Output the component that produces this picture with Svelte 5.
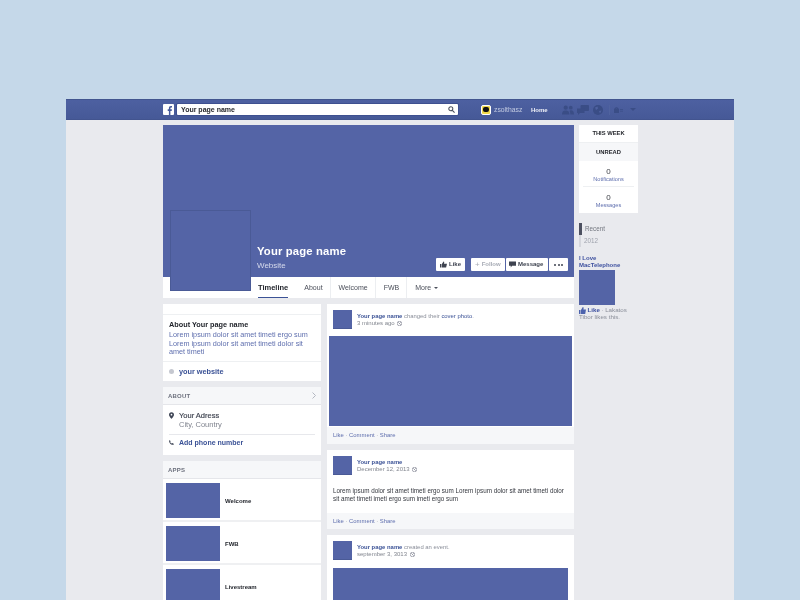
<script>
  const apps = ['Welcome', 'FWB', 'Livestream'];
  const tabs = ['About', 'Welcome', 'FWB'];
</script>

<div class="frame">
  <header class="topbar">
    <div class="fb"><svg viewBox="0 0 11 11" width="11" height="11"><rect width="11" height="11" rx="1" fill="#fff"/><path d="M7.4 11V6.900h1.300l.2-1.600H7.400v-1c0-.5.2-.8.8-.8h.8V2.100c-.2 0-.6-.1-1.100-.1-1.200 0-2 .7-2 2v1.300H4.700v1.600h1.200V11z" fill="#44589a"/></svg></div>
    <div class="search">
      <span>Your page name</span>
      <svg viewBox="0 0 8 8" width="7" height="7"><circle cx="3.200" cy="3.200" r="2.300" fill="none" stroke="#4a4f5c" stroke-width="1.200"/><path d="M5 5l2.500 2.500" stroke="#4a4f5c" stroke-width="1.300"/></svg>
    </div>
    <div class="avatar"><i></i></div>
    <span class="user">zsolthasz</span>
    <span class="home">Home</span>
    <div class="tools">
      <svg viewBox="0 0 13 10" width="12" height="10"><circle cx="4" cy="2.500" r="2.300"/><path d="M0 10c0-3.500 1.500-4.500 4-4.500S8 6.500 8 10z"/><circle cx="9.500" cy="2.500" r="2"/><path d="M8.800 5.500c2.700-.5 4.200 1 4.200 4.500H9c0-2-.2-3.300-1-4z"/></svg>
      <svg viewBox="0 0 12 10" width="12" height="10"><rect x="3.500" width="8.500" height="6" rx="1"/><path d="M0 3.500h7.500v4.500H3L1 10V8H0z"/></svg>
      <svg viewBox="0 0 10 10" width="10" height="10"><circle cx="5" cy="5" r="5"/><path d="M2 2.500l2.500-1 .5 2-2 1.500zM6 6l2.500-.5L7 8.500z" fill="#4f62a0"/></svg>
      <b class="sep"></b>
      <svg class="lock" viewBox="0 0 9 6" width="9" height="6"><path d="M0 1.500h5v4.500H0zM1 1.500a1.500 1.300 0 0 1 3 0h-.8a.7.600 0 0 0-1.400 0z"/><path d="M6 2h3v.8H6zM6 3.800h3v.8H6z"/></svg>
      <svg viewBox="0 0 6 3" width="6" height="3"><path d="M0 0h6L3 3z"/></svg>
    </div>
  </header>

  <div class="page">
    <div class="content">
      <section class="hero">
        <div class="cover">
          <div class="title">
            <h1>Your page name</h1>
            <p>Website</p>
          </div>
          <div class="actions">
            <button class="btn strong"><svg viewBox="0 0 8 7" width="7" height="7"><path d="M0 3h1.600v4H0zM2.200 3L4 0c1 0 1 1 .6 2.500H8L7 7H2.200z"/></svg>Like</button>
            <div class="group">
              <button class="btn muted"><span class="plus">+</span>Follow</button>
              <button class="btn msg"><svg viewBox="0 0 8 7" width="7" height="7"><path d="M0 0h8v5H3.500L2 7V5H0z"/></svg>Message</button>
              <button class="btn dots"><i></i><i></i><i></i></button>
            </div>
          </div>
        </div>
        <nav class="tabs">
          <span class="tab active">Timeline</span>
          {#each tabs as t}<span class="tab">{t}</span>{/each}
          <span class="tab last">More <i class="caret"></i></span>
        </nav>
        <div class="picture"></div>
      </section>

      <div class="columns">
        <aside class="left">
          <div class="card about">
            <div class="strip"></div>
            <div class="about-text">
              <h3>About Your page name</h3>
              <p>Lorem ipsum dolor sit amet timeti ergo sum Lorem ipsum dolor sit amet timeti dolor sit amet timeti</p>
            </div>
            <div class="site"><i></i><a>your website</a></div>
          </div>

          <div class="card">
            <div class="head">ABOUT<svg viewBox="0 0 4 7" width="4" height="7"><path d="M.5.500L3.500 3.500.5 6.500" fill="none" stroke="#b4b8c2"/></svg></div>
            <div class="info">
              <div class="addr">
                <svg viewBox="0 0 6 8" width="5" height="7"><path fill-rule="evenodd" d="M3 0a3 3 0 0 1 3 3c0 2-3 5-3 5S0 5 0 3a3 3 0 0 1 3-3zm0 2a1 1 0 1 0 0 2 1 1 0 0 0 0-2z" fill="#3f4656"/></svg>
                <div><strong>Your Adress</strong><span>City, Country</span></div>
              </div>
              <div class="phone">
                <svg viewBox="0 0 7 7" width="5" height="5"><path d="M1 0l1.300 1.800-.7.900c.4 1 1.100 1.700 2.300 2.200l.9-.7L7 5.600C6.500 6.700 5.500 7 4.500 6.700 2.500 6 .7 4.200.2 2.300 0 1.300.300.400 1 0z" fill="#3f4656"/></svg>
                <a>Add phone number</a>
              </div>
            </div>
          </div>

          <div class="card">
            <div class="head">APPS</div>
            {#each apps as a}
              <div class="app"><div class="thumb"></div><b>{a}</b></div>
            {/each}
          </div>
        </aside>

        <main class="feed">
          <article class="post first">
            <div class="meta">
              <div class="ava"></div>
              <div class="who">
                <div><a class="nm">Your page name</a> changed their <a>cover photo</a>.</div>
                <div class="when">3 minutes ago <svg viewBox="0 0 6 6" width="5" height="5"><use href="#globe"/></svg></div>
              </div>
            </div>
            <div class="photo"></div>
            <div class="foot"><a>Like</a> · <a>Comment</a> · <a>Share</a></div>
          </article>

          <article class="post second">
            <div class="meta">
              <div class="ava"></div>
              <div class="who">
                <div><a class="nm">Your page name</a></div>
                <div class="when">December 12, 2013 <svg viewBox="0 0 6 6" width="5" height="5"><use href="#globe"/></svg></div>
              </div>
            </div>
            <p class="body">Lorem ipsum dolor sit amet timeti ergo sum Lorem ipsum dolor sit amet timeti dolor sit amet timeti imeti ergo sum imeti ergo sum</p>
            <div class="foot"><a>Like</a> · <a>Comment</a> · <a>Share</a></div>
          </article>

          <article class="post">
            <div class="meta">
              <div class="ava"></div>
              <div class="who">
                <div><a class="nm">Your page name</a> created an event.</div>
                <div class="when">september 3, 3013 <svg viewBox="0 0 6 6" width="5" height="5"><use href="#globe"/></svg></div>
              </div>
            </div>
            <div class="event"></div>
          </article>
        </main>
      </div>
    </div>

    <aside class="side">
      <div class="week">
        <div class="wk">THIS WEEK</div>
        <div class="wk unread">UNREAD</div>
        <div class="stat"><b>0</b><a>Notifications</a></div>
        <div class="stat"><b>0</b><a>Messages</a></div>
      </div>
      <div class="years">
        <span class="on">Recent</span>
        <span>2012</span>
      </div>
      <div class="ad">
        <a class="adt">I Love<br/>MacTelephone</a>
        <div class="adimg"></div>
        <div class="adline"><svg viewBox="0 0 7 7" width="7" height="7"><path d="M0 3h1.500v4H0zM2 3l1.800-3c1 0 1 1 .6 2.500H7L6.200 7H2z" fill="#4d63ad"/></svg><a>Like</a><span>· Lakatos</span></div>
        <div>Tibor likes this.</div>
      </div>
    </aside>
  </div>
</div>

<svg width="0" height="0" class="defs"><defs><g id="globe"><circle cx="3" cy="3" r="2.700" fill="none" stroke="#7d8290" stroke-width=".8"/><path d="M1.500 1.500l3 3M4.500 1.500L3 3" stroke="#7d8290" stroke-width=".8"/></g></defs></svg>

<style>
  :global(body) { margin: 0; background: #c5d8e9; overflow: hidden; }
  * { box-sizing: border-box; }
  a { color: #3b5296; }
  .defs { position: absolute; }
  .frame {
    margin: 99px 0 0 66px; width: 668px; height: 501px; overflow: hidden;
    background: #e9eaee; font-family: "Liberation Sans", Arial, sans-serif; color: #333;
    filter: blur(.3px);
  }
  .topbar {
    height: 21px; padding-left: 97px; display: flex; align-items: center;
    background: linear-gradient(#4d60a1, #465997);
    border-top: 1px solid #42558f; border-bottom: 1px solid #42548f;
  }
  .fb { width: 11px; height: 11px; margin-right: 3px; display: flex; }
  .search {
    width: 281px; height: 11px; background: #fff; border-radius: 1px; padding: 0 3px 0 4px;
    display: flex; justify-content: space-between; align-items: center;
    font-size: 7px; font-weight: 700; color: #26282e; box-shadow: 0 0 0 1px #3e5090;
  }
  .avatar { width: 10px; height: 10px; margin-left: 23px; border-radius: 2px; background: #f1d94a; border: 1px solid #fff; display: flex; align-items: center; justify-content: center; }
  .avatar i { width: 6px; height: 5px; border-radius: 2px; background: #111; display: block; }
  .user { margin-left: 3px; font-size: 6.800px; color: #c3cbe2; width: 37px; }
  .home { font-size: 6px; font-weight: 700; color: #eef0f7; }
  .tools { margin-left: 14px; display: flex; align-items: center; gap: 3.500px; }
  .tools svg { fill: #3a4d86; }
  .tools .sep { width: 1px; height: 10px; background: #50639f; margin: 0 1px 0 2.500px; }
  .tools .lock { margin-right: 3px; }

  .page { display: flex; gap: 5px; padding: 5px 0 0 97px; }
  .content { width: 411px; flex: none; }
  .side { width: 59px; flex: none; }

  .hero { position: relative; background: #fff; }
  .cover { height: 152px; background: #5464a6; position: relative; display: flex; align-items: flex-end; justify-content: space-between; padding: 0 6px 6px 94px; }
  .title { color: #fff; }
  .title h1 { margin: 0 0 3px; font-size: 11.300px; font-weight: 700; line-height: 14px; letter-spacing: .15px; }
  .title p { margin: 0; font-size: 8px; line-height: 10px; color: #d6daec; }
  .actions { display: flex; gap: 6px; }
  .group { display: flex; gap: 1px; }
  .btn {
    height: 13px; padding: 0 4px; border: 0; background: #fff; border-radius: 1px;
    font: 700 6px/13px "Liberation Sans", Arial, sans-serif; color: #3e4350;
    display: flex; align-items: center; gap: 2px;
  }
  .btn svg { fill: #3e4350; }
  .btn.strong { width: 29px; }
  .btn.muted { color: #a8acb6; width: 34px; }
  .btn.msg { width: 42px; padding: 0 3px; }
  .plus { font-size: 8px; font-weight: 400; }
  .btn.dots { width: 19px; gap: 1.500px; justify-content: center; }
  .dots i { width: 2px; height: 2px; background: #3e4350; border-radius: 50%; }

  .tabs { height: 21px; padding-left: 95px; display: flex; font-size: 7px; line-height: 21px; color: #4b4f5a; }
  .tab { padding: 0 7px 0 8px; border-right: 1px solid #eceef1; position: relative; }
  .tab.active { font-size: 7.500px; font-weight: 700; color: #23262d; padding: 0; margin-right: 8px; border: 0; border-bottom: 1px solid #3b5296; }
  .tab.last { border: 0; }
  .caret { display: inline-block; border: 2px solid transparent; border-top-color: #4b4f5a; border-bottom: 0; vertical-align: middle; margin-left: 1px; }
  .picture { position: absolute; left: 7px; top: 85px; width: 81px; height: 81px; background: #5464a6; border: 1px solid #4a5a96; }

  .columns { display: grid; grid-template-columns: 158px 247px; gap: 6px; margin-top: 6px; }
  .left { display: flex; flex-direction: column; gap: 6px; }
  .card { background: #fff; }
  .strip { height: 11px; border-bottom: 1px solid #eef0f2; }
  .about-text { padding: 5px 6px 5px; border-bottom: 1px solid #eef0f2; height: 47px; }
  .about-text h3 { margin: 0 0 2px; font-size: 7.300px; line-height: 9px; font-weight: 700; color: #1d2027; }
  .about-text p { margin: 0; font-size: 7.240px; line-height: 8.700px; color: #5f6fae; }
  .site { height: 19px; padding-left: 6px; display: flex; align-items: center; gap: 5px; font-size: 7.300px; font-weight: 700; }
  .site i { width: 5px; height: 5px; border-radius: 50%; background: #c5c8d0; }
  .head {
    height: 18px; padding: 0 5px; background: #f6f7f9; border-bottom: 1px solid #e5e6ea;
    display: flex; align-items: center; justify-content: space-between;
    font-size: 6px; font-weight: 700; color: #6b6f7c; letter-spacing: .2px;
  }
  .info { padding: 6px 6px 0; height: 50px; font-size: 7.500px; }
  .addr { display: flex; gap: 5px; height: 24px; border-bottom: 1px solid #e7e8ec; align-items: flex-start; }
  .addr svg { margin-top: 1px; }
  .addr strong { display: block; font-weight: 400; color: #3a3f4c; line-height: 9px; -webkit-text-stroke: .15px #3a3f4c; }
  .addr span { display: block; color: #80848f; line-height: 9px; }
  .phone { display: flex; gap: 5px; align-items: center; padding-top: 4px; font-size: 7px; font-weight: 700; }
  .app { height: 43px; padding: 5px 3px 3px; display: flex; gap: 5px; align-items: center; border-bottom: 2px solid #eff0f2; font-size: 6px; color: #23262d; }
  .thumb { width: 54px; height: 35px; background: #5464a6; }

  .feed { display: flex; flex-direction: column; gap: 6px; }
  .post { background: #fff; }
  .meta { display: flex; gap: 5px; padding: 6px 6px 0; height: 32px; }
  .ava { width: 19px; height: 19px; background: #5464a6; border-bottom: 1px solid #4a5a96; flex: none; }
  .who { font-size: 5.900px; line-height: 7.500px; color: #8a8e99; padding-top: 2.500px; }
  .nm { font-weight: 700; }
  .when { color: #82868f; font-size: 6px; }
  .when svg { vertical-align: -1px; margin-left: 1px; }
  .photo { height: 90px; margin: 0 2px; background: #5464a6; }
  .foot { height: 17px; margin-top: 1px; padding-left: 6px; background: #f6f7f9; font-size: 5.900px; line-height: 16px; color: #8a8e99; }
  .foot a { color: #5f6fae; }
  .body { margin: 0; padding: 5px 6px 0; height: 29px; font-size: 6.300px; line-height: 8px; color: #33363d; }
  .second .foot { height: 16px; margin-top: 2px; }
  .event { height: 60px; margin: 1px 6px 0; background: #5464a6; }

  .week { background: #fff; height: 88px; }
  .wk { height: 18px; font-size: 5.800px; font-weight: 700; line-height: 16px; text-align: center; color: #1e2026; border-bottom: 1px solid #eef0f2; }
  .wk.unread { background: #f6f7f9; border-bottom: 0; line-height: 18px; }
  .stat { height: 26px; margin: 0 4px; display: flex; flex-direction: column; align-items: center; border-bottom: 1px solid #eef0f2; padding-top: 7px; }
  .stat:last-child { border: 0; }
  .stat b { font-size: 8px; font-weight: 400; line-height: 8px; color: #3a3d44; }
  .stat a { font-size: 5.600px; line-height: 7px; color: #5f6fae; }
  .years { margin-top: 10px; display: flex; flex-direction: column; font-size: 6.300px; color: #9ea2ac; }
  .years span { height: 12px; line-height: 12px; padding-left: 3px; border-left: 2px solid #d4d6dc; }
  .years .on { border-left: 3px solid #4c5060; padding-left: 3px; color: #72767f; font-weight: 400; }
  .ad { margin-top: 8px; font-size: 6.200px; line-height: 6.500px; color: #8a8e99; }
  .adt { font-weight: 700; display: block; font-size: 6px; line-height: 6.500px; color: #3f52a0; }
  .adimg { width: 36px; height: 35px; margin: 2px 0; background: #5464a6; }
  .adline { display: flex; align-items: center; gap: 1.500px; white-space: nowrap; }
  .adline a { color: #3f52a0; font-weight: 700; }
</style>
